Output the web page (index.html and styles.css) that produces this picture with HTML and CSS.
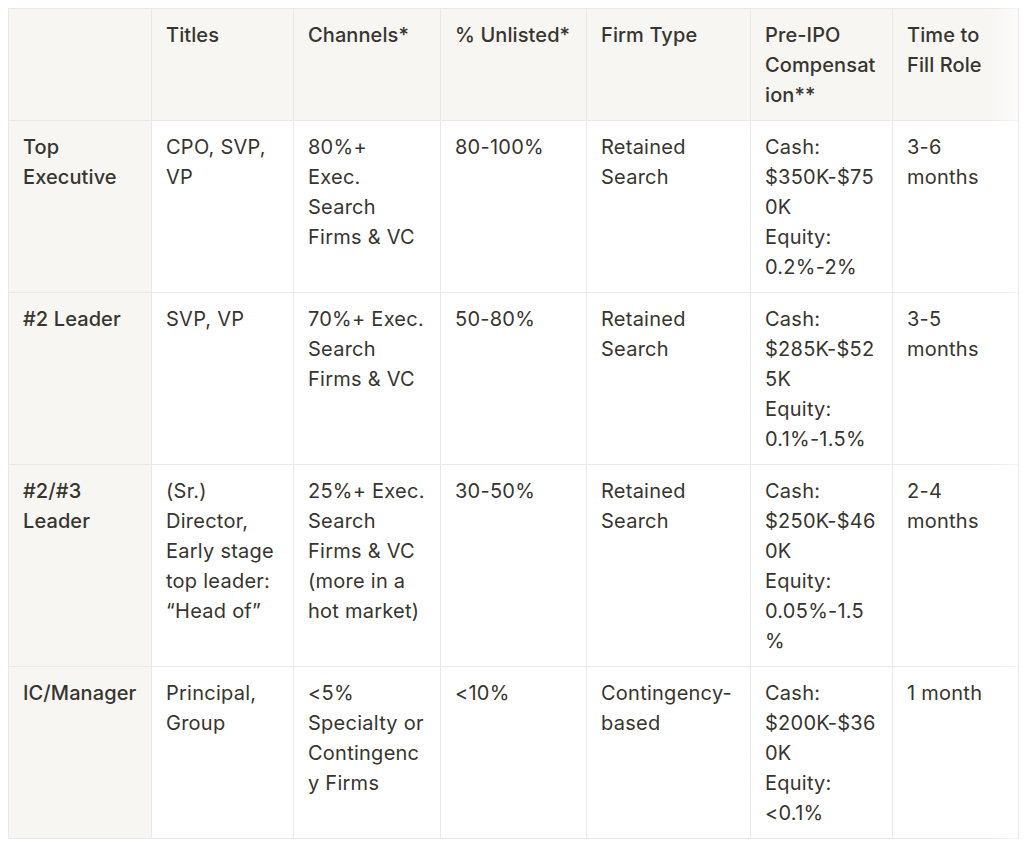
FILE: index.html
```html
<!DOCTYPE html>
<html>
<head>
<meta charset="utf-8">
<link rel="stylesheet" href="styles.css">
</head>
<body>
<div class="wrap">
<table class="grid">
  <colgroup>
    <col class="c1"><col class="c2"><col class="c3"><col class="c4"><col class="c5"><col class="c6"><col class="c7">
  </colgroup>
  <thead>
    <tr>
      <th></th>
      <th>Titles</th>
      <th>Channels*</th>
      <th>% Unlisted*</th>
      <th>Firm Type</th>
      <th>Pre-IPO Compensation**</th>
      <th>Time to Fill Role</th>
    </tr>
  </thead>
  <tbody>
    <tr>
      <th>Top Executive</th>
      <td>CPO, SVP, VP</td>
      <td>80%+<br>Exec. Search Firms &amp; VC</td>
      <td>80-100%</td>
      <td>Retained Search</td>
      <td>Cash: $350K-$750K<br>Equity: 0.2%-2%</td>
      <td>3-6 months</td>
    </tr>
    <tr>
      <th>#2 Leader</th>
      <td>SVP, VP</td>
      <td>70%+ Exec. Search Firms &amp; VC</td>
      <td>50-80%</td>
      <td>Retained Search</td>
      <td>Cash: $285K-$525K<br>Equity: 0.1%-1.5%</td>
      <td>3-5 months</td>
    </tr>
    <tr>
      <th>#2/#3 Leader</th>
      <td>(Sr.) Director, Early stage top leader: “Head of”</td>
      <td>25%+ Exec. Search Firms &amp; VC (more in a hot market)</td>
      <td>30-50%</td>
      <td>Retained Search</td>
      <td>Cash: $250K-$460K<br>Equity: 0.05%-1.5%</td>
      <td>2-4 months</td>
    </tr>
    <tr>
      <th>IC/Manager</th>
      <td>Principal, Group</td>
      <td>&lt;5% Specialty or Contingency Firms</td>
      <td>&lt;10%</td>
      <td>Contingency-based</td>
      <td>Cash: $200K-$360K<br>Equity: &lt;0.1%</td>
      <td>1 month</td>
    </tr>
  </tbody>
</table>
</div>
</body>
</html>
```

FILE: styles.css
```css
html, body {
  background: #ffffff;
}
body {
  margin: 8px;
  font-family: Inter, "Noto Sans", sans-serif;
  color: rgb(55, 53, 47);
}
.wrap {
  position: relative;
  width: 1010px;
}
.wrap::after {
  content: "";
  position: absolute;
  top: 0;
  right: 0;
  bottom: 0;
  width: 28px;
  background: linear-gradient(to right, rgba(255, 255, 255, 0), rgba(255, 255, 255, 0.55));
  pointer-events: none;
}
.grid {
  border-collapse: collapse;
  table-layout: fixed;
  width: 1010px;
  font-size: 20px;
  line-height: 30px;
  letter-spacing: 0.25px;
}
.c1 { width: 143px; }
.c2 { width: 142px; }
.c3 { width: 147px; }
.c4 { width: 146px; }
.c5 { width: 164px; }
.c6 { width: 142px; }
.c7 { width: 126px; }
.grid th,
.grid td {
  border: 1px solid rgb(233, 233, 231);
  padding: 11px 14px 10px;
  vertical-align: top;
  text-align: left;
  overflow-wrap: anywhere;
  word-break: break-word;
}
.grid th {
  font-weight: 500;
  letter-spacing: 0.1px;
  background: rgb(247, 246, 243);
}
.grid td {
  font-weight: 400;
  background: #ffffff;
}
```
